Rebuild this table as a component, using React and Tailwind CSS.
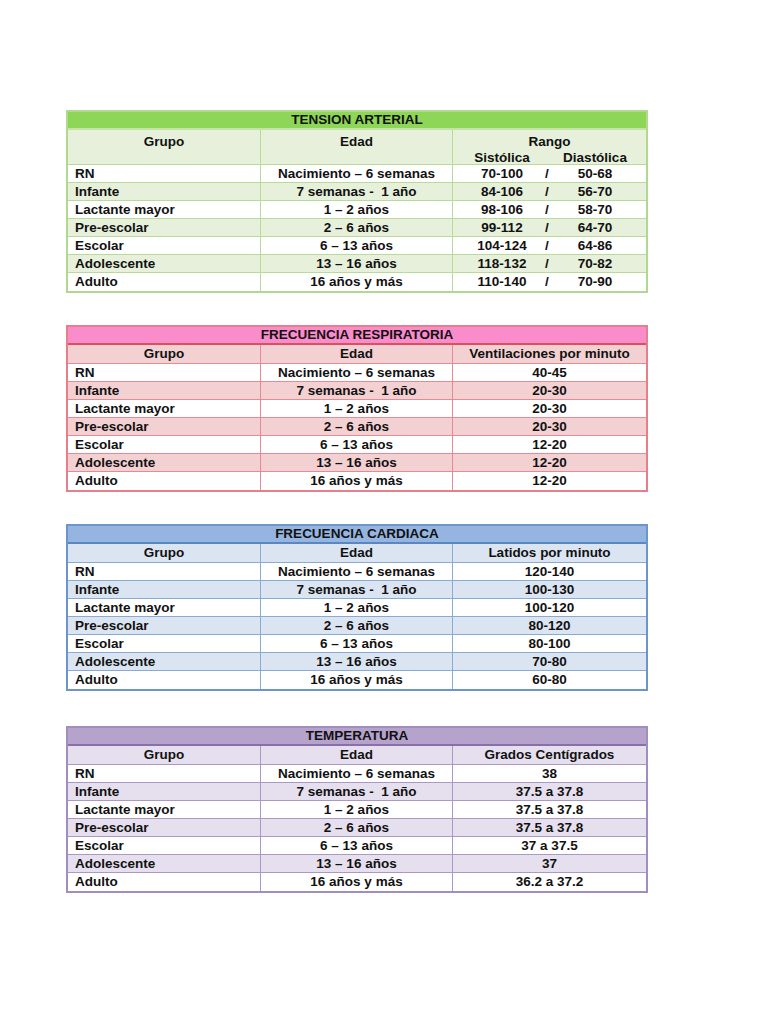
import React from "react";

const rowsBase = [
  ["RN", "Nacimiento – 6 semanas"],
  ["Infante", "7 semanas -\u00a0 1 año"],
  ["Lactante mayor", "1 – 2 años"],
  ["Pre-escolar", "2 – 6 años"],
  ["Escolar", "6 – 13 años"],
  ["Adolescente", "13 – 16 años"],
  ["Adulto", "16 años y más"],
];

const themes = {
  green: {
    outer: "border-[#b0d88f]",
    title: "bg-[#8dd657] border-b-[#c4e4a6]",
    alt: "bg-[#e6f0db]",
    line: "border-[#b8dc98]",
  },
  pink: {
    outer: "border-[#e77f8a]",
    title: "bg-[#fb8ccb] border-b-[#d9515f]",
    alt: "bg-[#f3d0d1]",
    line: "border-[#e78a93]",
  },
  blue: {
    outer: "border-[#6b95cc]",
    title: "bg-[#95b5e0] border-b-[#5a86c2]",
    alt: "bg-[#dbe5f2]",
    line: "border-[#8aaad6]",
  },
  purple: {
    outer: "border-[#a28dbf]",
    title: "bg-[#b5a3cc] border-b-[#8a6faa]",
    alt: "bg-[#e6dfee]",
    line: "border-[#ab98c6]",
  },
};

function Table({ theme, title, header3, values, tension }) {
  const t = themes[theme];
  return (
    <div className={`w-[582px] ml-[66px] border-2 ${t.outer} text-[13.5px] font-bold text-[#111] leading-none`}>
      <div className={`h-[18px] flex items-center justify-center border-b-2 ${t.title}`}>{title}</div>
      {tension ? (
        <div className={`grid grid-cols-[193px_192px_1fr] h-[35px] border-b ${t.line} ${t.alt}`}>
          <div className={`border-r ${t.line} text-center pt-[5px]`}>Grupo</div>
          <div className={`border-r ${t.line} text-center pt-[5px]`}>Edad</div>
          <div className="pt-[5px]">
            <div className="text-center">Rango</div>
            <div className="grid grid-cols-[80px_10px_86px] pl-[9px] mt-[2px]">
              <span className="text-center">Sistólica</span>
              <span></span>
              <span className="text-center">Diastólica</span>
            </div>
          </div>
        </div>
      ) : (
        <div className={`grid grid-cols-[193px_192px_1fr] h-[19px] border-b ${t.line} ${t.alt}`}>
          <div className={`border-r ${t.line} flex items-center justify-center`}>Grupo</div>
          <div className={`border-r ${t.line} flex items-center justify-center`}>Edad</div>
          <div className="flex items-center justify-center">{header3}</div>
        </div>
      )}
      {rowsBase.map((r, i) => (
        <div
          key={i}
          className={`grid grid-cols-[193px_192px_1fr] h-[18px] ${i < 6 ? "border-b" : ""} ${t.line} ${i % 2 === 1 ? t.alt : "bg-white"}`}
        >
          <div className={`border-r ${t.line} flex items-center pl-[7px]`}>{r[0]}</div>
          <div className={`border-r ${t.line} flex items-center justify-center`}>{r[1]}</div>
          {tension ? (
            <div className="grid grid-cols-[80px_10px_86px] pl-[9px] items-center">
              <span className="text-center">{values[i][0]}</span>
              <span className="text-center">/</span>
              <span className="text-center">{values[i][1]}</span>
            </div>
          ) : (
            <div className="flex items-center justify-center">{values[i]}</div>
          )}
        </div>
      ))}
    </div>
  );
}

export default function App() {
  return (
    <div
      className="w-[768px] h-[1024px] bg-white pt-[110px]"
      style={{ fontFamily: '"Liberation Sans", Arial, sans-serif' }}
    >
      <Table
        theme="green"
        title="TENSION ARTERIAL"
        tension
        values={[
          ["70-100", "50-68"],
          ["84-106", "56-70"],
          ["98-106", "58-70"],
          ["99-112", "64-70"],
          ["104-124", "64-86"],
          ["118-132", "70-82"],
          ["110-140", "70-90"],
        ]}
      />
      <div className="h-[32px]" />
      <Table
        theme="pink"
        title="FRECUENCIA RESPIRATORIA"
        header3="Ventilaciones por minuto"
        values={["40-45", "20-30", "20-30", "20-30", "12-20", "12-20", "12-20"]}
      />
      <div className="h-[32px]" />
      <Table
        theme="blue"
        title="FRECUENCIA CARDIACA"
        header3="Latidos por minuto"
        values={["120-140", "100-130", "100-120", "80-120", "80-100", "70-80", "60-80"]}
      />
      <div className="h-[35px]" />
      <Table
        theme="purple"
        title="TEMPERATURA"
        header3="Grados Centígrados"
        values={["38", "37.5 a 37.8", "37.5 a 37.8", "37.5 a 37.8", "37 a 37.5", "37", "36.2 a 37.2"]}
      />
    </div>
  );
}
